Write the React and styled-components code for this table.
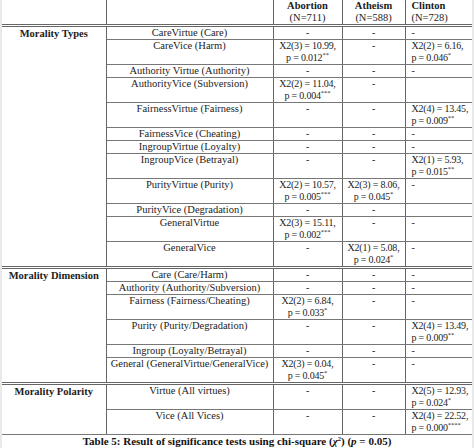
import React from 'react'
import styled, { createGlobalStyle } from 'styled-components'

const GlobalStyle = createGlobalStyle`
  body {
    margin: 0;
    background: #e9e9e9;
    font-family: "Liberation Serif", "Times New Roman", serif;
  }
`

const Page = styled.div`
  margin: 0 2px;
  width: 470px;
  height: 448px;
  background: #fff;
  overflow: hidden;
`

const Table = styled.table`
  border-collapse: collapse;
  table-layout: fixed;
  width: 470px;
  font-size: 10.5px;
  line-height: 12px;
  color: #1c1c1c;
`

const Col = styled.col`
  width: ${p => p.$w}px;
`

const HeadCell = styled.th`
  padding: ${p => (p.$align === 'left' ? '0 0 0 6px' : '0 3px')};
  text-align: ${p => p.$align || 'center'};
  vertical-align: top;
  font-weight: normal;
  border-left: 1px solid #666;
  border-bottom: 3px double #666;
  height: 24px;
  &:first-child {
    border-left: none;
  }
`

const HeadName = styled.div`
  font-weight: bold;
`

const Row = styled.tr`
  & > td {
    border-top: ${p => (p.$groupStart ? '3px double #666' : '1px solid #777')};
  }
`

const Cell = styled.td`
  padding: ${p => (p.$align === 'left' ? '0 0 0 6px' : '0 2px')};
  text-align: ${p => p.$align || 'center'};
  vertical-align: top;
  border-left: 1px solid #666;
  border-right: 1px solid #666;
  border-bottom: 1px solid #777;
  white-space: nowrap;
  font-size: ${p => (p.$num ? '10px' : '10.5px')};
  letter-spacing: ${p => (p.$num ? '-0.2px' : '0')};
`

const GroupCell = styled(Cell)`
  font-weight: bold;
  border-left: none;
  padding-top: 1px;
`

const Sup = styled.sup`
  font-size: 6.5px;
  line-height: 0;
  vertical-align: 4px;
  letter-spacing: 0;
`

const Caption = styled.div`
  font-size: 11px;
  line-height: 13px;
  font-weight: bold;
  text-align: center;
  color: #111;
`

const Italic = styled.i`
  font-weight: bold;
`

const groups = [
  {
    name: 'Morality Types',
    rows: [
      ['CareVirtue (Care)', '-', '-', '-'],
      ['CareVice (Harm)', ['X2(3) = 10.99,', '0.012', '**'], '-', ['X2(2) = 6.16,', '0.046', '*']],
      ['Authority Virtue (Authority)', '-', '-', '-'],
      ['AuthorityVice (Subversion)', ['X2(2) = 11.04,', '0.004', '***'], '-', ''],
      ['FairnessVirtue (Fairness)', '-', '-', ['X2(4) = 13.45,', '0.009', '**']],
      ['FairnessVice (Cheating)', '-', '-', '-'],
      ['IngroupVirtue (Loyalty)', '-', '-', '-'],
      ['IngroupVice (Betrayal)', '-', '-', ['X2(1) = 5.93,', '0.015', '**']],
      ['PurityVirtue (Purity)', ['X2(2) = 10.57,', '0.005', '***'], ['X2(3) = 8.06,', '0.045', '*'], '-'],
      ['PurityVice (Degradation)', '-', '-', ''],
      ['GeneralVirtue', ['X2(3) = 15.11,', '0.002', '***'], '-', '-'],
      ['GeneralVice', '-', ['X2(1) = 5.08,', '0.024', '*'], '-'],
    ],
  },
  {
    name: 'Morality Dimension',
    rows: [
      ['Care (Care/Harm)', '-', '-', '-'],
      ['Authority (Authority/Subversion)', '-', '-', '-'],
      ['Fairness (Fairness/Cheating)', ['X2(2) = 6.84,', '0.033', '*'], '-', '-'],
      ['Purity (Purity/Degradation)', '-', '-', ['X2(4) = 13.49,', '0.009', '**']],
      ['Ingroup (Loyalty/Betrayal)', '-', '-', '-'],
      ['General (GeneralVirtue/GeneralVice)', ['X2(3) = 0.04,', '0.045', '*'], '-', '-'],
    ],
  },
  {
    name: 'Morality Polarity',
    rows: [
      ['Virtue (All virtues)', '-', '-', ['X2(5) = 12.93,', '0.024', '*']],
      ['Vice (All Vices)', '-', '-', ['X2(4) = 22.52,', '0.000', '****']],
    ],
  },
]

const Value = ({ v }) => {
  if (!Array.isArray(v)) return v
  const [stat, p, stars] = v
  return (
    <>
      {stat}
      <br />
      p = {p}
      <Sup>{stars}</Sup>
    </>
  )
}

export default function App() {
  return (
    <Page>
      <GlobalStyle />
      <Table>
        <colgroup>
          <Col $w={104} />
          <Col $w={167} />
          <Col $w={69} />
          <Col $w={63} />
          <Col $w={67} />
        </colgroup>
        <thead>
          <tr>
            <HeadCell />
            <HeadCell />
            <HeadCell>
              <HeadName>Abortion</HeadName>(N=711)
            </HeadCell>
            <HeadCell>
              <HeadName>Atheism</HeadName>(N=588)
            </HeadCell>
            <HeadCell $align="left">
              <HeadName>Clinton</HeadName>(N=728)
            </HeadCell>
          </tr>
        </thead>
        <tbody>
          {groups.map(g =>
            g.rows.map((r, i) => (
              <Row key={g.name + i} $groupStart={i === 0}>
                {i === 0 && <GroupCell rowSpan={g.rows.length}>{g.name}</GroupCell>}
                <Cell>{r[0]}</Cell>
                <Cell $num>
                  <Value v={r[1]} />
                </Cell>
                <Cell $num>
                  <Value v={r[2]} />
                </Cell>
                <Cell $num $align="left">
                  <Value v={r[3]} />
                </Cell>
              </Row>
            ))
          )}
        </tbody>
      </Table>
      <Caption>
        Table 5: Result of significance tests using chi-square (<Italic>χ</Italic>
        <Sup>2</Sup>) (<Italic>p</Italic> = 0.05)
      </Caption>
    </Page>
  )
}
